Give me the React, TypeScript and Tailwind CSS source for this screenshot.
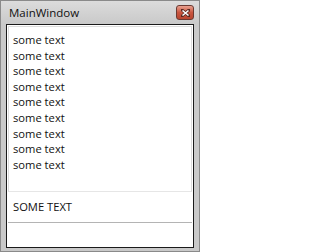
import React from 'react';

const lines = Array.from({ length: 9 }, () => 'some text');

const App: React.FC = () => {
  return (
    <div
      className="w-[200px] h-[252px] bg-[#c9c9c9] border border-[#8a8a8a] flex flex-col overflow-hidden"
      style={{ fontFamily: '"Open Sans", "Noto Sans", sans-serif' }}
    >
      {/* title bar */}
      <div className="h-[23px] shrink-0 flex items-center justify-between pl-[8px] pr-[5px] bg-gradient-to-b from-[#dcdcdc] to-[#c9c9c9]">
        <span className="text-[11.5px] text-[#111] leading-none mt-[1px]">MainWindow</span>
        <button className="w-[18px] h-[15px] rounded-[3px] border border-[#6b3a32] bg-gradient-to-b from-[#e8a08f] via-[#c9553f] to-[#b8452f] flex items-center justify-center">
          <svg width="9" height="8" viewBox="0 0 9 8">
            <path d="M1 1 L8 7 M8 1 L1 7" stroke="#5a2a22" strokeWidth="3" strokeLinecap="square" />
            <path d="M1.5 1.5 L7.5 6.5 M7.5 1.5 L1.5 6.5" stroke="#ffffff" strokeWidth="1.6" />
          </svg>
        </button>
      </div>

      {/* client area */}
      <div className="flex-1 flex flex-col px-[5px] pb-[3px]">
        <div className="flex-1 flex flex-col border border-[#1a1a1a] bg-white p-[1px]">
          <div className="h-[166px] border border-[#dcdcdc] border-b-[#e6e6e6] pt-[5px] pl-[4px]">
            {lines.map((t, i) => (
              <div key={i} className="text-[11.2px] leading-[15.6px] text-[#111]">
                {t}
              </div>
            ))}
          </div>
          <div className="h-[31px] flex items-center pl-[5px] text-[11.2px] text-[#111] border-b border-[#b4b4b4]">
            SOME TEXT
          </div>
          <div className="flex-1" />
        </div>
      </div>
    </div>
  );
};

export default App;
